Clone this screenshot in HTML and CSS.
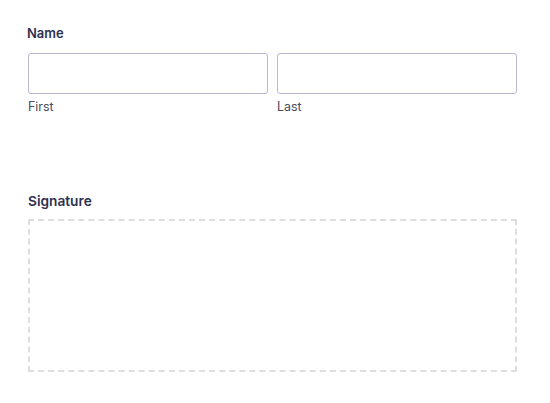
FILE: index.html
```html
<!DOCTYPE html>
<html>
<head>
<meta charset="utf-8">
<link rel="stylesheet" href="styles.css">
</head>
<body>
<div class="form">
  <div class="field name-field">
    <div class="label">Name</div>
    <div class="name-row">
      <div class="sub">
        <div class="input"></div>
        <div class="hint">First</div>
      </div>
      <div class="sub">
        <div class="input"></div>
        <div class="hint">Last</div>
      </div>
    </div>
  </div>
  <div class="field sig-field">
    <div class="label">Signature</div>
    <div class="sig-box"></div>
  </div>
</div>
</body>
</html>
```
FILE: styles.css
```css
html, body {
  margin: 0;
  padding: 0;
  background: #ffffff;
}
body {
  font-family: Inter, "Noto Sans", sans-serif;
  width: 550px;
  height: 403px;
  overflow: hidden;
}
.form {
  padding: 24px 33px 0 28px;
  display: flex;
  flex-direction: column;
}
.label {
  font-size: 13px;
  font-weight: 600;
  color: #2f2f4f;
  line-height: 18px;
}
.name-field .label {
  margin-left: -1px;
}
.name-row {
  display: flex;
  gap: 9px;
  margin-top: 11px;
}
.sub {
  flex: 1;
  display: flex;
  flex-direction: column;
}
.input {
  height: 39px;
  border: 1px solid #b9b7d1;
  border-radius: 3px;
  background: #fff;
}
.hint {
  font-size: 12.4px;
  color: #4b4b5c;
  line-height: 16px;
  margin-top: 5px;
}
.sig-field {
  margin-top: 77px;
}
.sig-field .label {
  font-size: 13.7px;
}
.sig-box {
  margin-top: 9px;
  height: 149px;
  border: 2px dashed #dedede;
}
```
